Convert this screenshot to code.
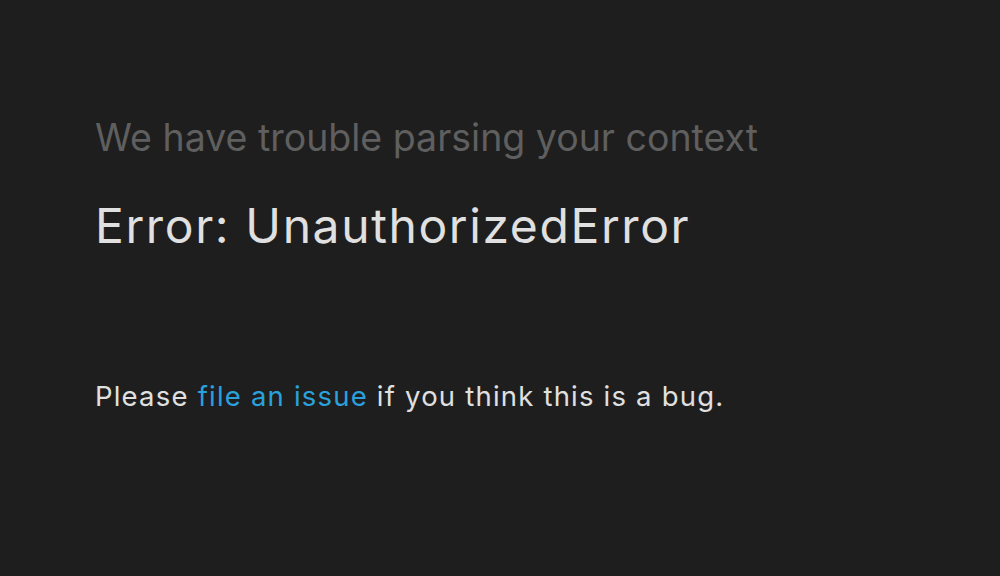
export default function App() {
  return (
    <div className="min-h-screen w-full bg-[#1e1e1e] font-['Inter',sans-serif]">
      <div className="px-[95px] pt-[114px]">
        <h1 className="text-[37.5px] leading-[48px] text-[#5f5f5f] font-normal">
          We have trouble parsing your context
        </h1>
        <h2 className="mt-[35px] text-[48px] leading-[58px] text-[#e0e0e0] font-normal tracking-[1.6px]">
          Error: UnauthorizedError
        </h2>
        <p className="mt-[123px] text-[27.5px] leading-[36px] text-[#e0e0e0] tracking-[1.2px]">
          Please <a href="#" className="text-[#2aa1dc]">file an issue</a> if you think this is a bug.
        </p>
      </div>
    </div>
  );
}
